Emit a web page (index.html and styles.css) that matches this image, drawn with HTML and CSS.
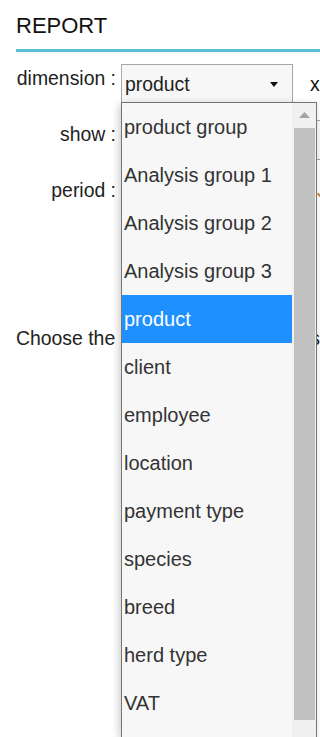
FILE: index.html
```html
<!DOCTYPE html>
<html lang="en">
<head>
  <meta charset="UTF-8" />
  <meta name="viewport" content="width=device-width, initial-scale=1.0"/>
  <title>Report</title>
  <link rel="stylesheet" href="styles.css">
</head>
<body>
  <h1 class="title">REPORT</h1>
  <div class="form">
    <div class="row">
      <label class="label">dimension :</label>
      <div class="select">
        <span>product</span>
        <svg class="caret" width="8" height="5" viewBox="0 0 8 5"><path d="M0 0h8L4 5z" fill="#111"/></svg>
      </div>
      <span class="extra">x</span>
    </div>
    <div class="row">
      <label class="label">show :</label>
      <div class="select wide"><span>quantity</span></div>
    </div>
    <div class="row">
      <label class="label">period :</label>
      <div class="period"><span class="date">01/01/24</span><span class="date-icon">J</span></div>
    </div>
  </div>
  <p class="hint"><span class="hint-start">Choose the</span><span class="hint-end">s</span></p>

  <div class="dropdown">
    <ul class="options">
      <li>product group</li>
      <li>Analysis group 1</li>
      <li>Analysis group 2</li>
      <li>Analysis group 3</li>
      <li class="selected">product</li>
      <li>client</li>
      <li>employee</li>
      <li>location</li>
      <li>payment type</li>
      <li>species</li>
      <li>breed</li>
      <li>herd type</li>
      <li>VAT</li>
    </ul>
    <div class="scrollbar">
      <div class="scroll-up">
        <svg width="11" height="6" viewBox="0 0 11 6"><path d="M0 6L5.5 0L11 6z" fill="#a3a3a3"/></svg>
      </div>
      <div class="thumb"></div>
    </div>
  </div>
</body>
</html>
```

FILE: styles.css
```css
html, body {
  height: 737px;
  overflow: hidden;
}
body {
  margin: 0;
  padding: 0 0 0 16px;
  font-family: "Liberation Sans", Arial, sans-serif;
  font-size: 19.4px;
  color: #222;
  background-color: #fff;
  position: relative;
}
.title {
  font-size: 22px;
  font-weight: normal;
  color: #111;
  margin: 0;
  padding: 13px 0 10px;
  border-bottom: 3px solid #5bbfd8;
}
.form {
  margin-top: 12px;
  display: flex;
  flex-direction: column;
  gap: 16px;
}
.row {
  display: flex;
  align-items: flex-start;
  height: 40px;
  white-space: nowrap;
}
.label {
  width: 100px;
  margin-right: 5px;
  padding-top: 3px;
  text-align: right;
  flex-shrink: 0;
}
.select {
  width: 172px;
  height: 40px;
  box-sizing: border-box;
  border: 1px solid #a6a6a6;
  background-color: #f7f7f7;
  padding: 0 14px 0 3px;
  display: flex;
  align-items: center;
  justify-content: space-between;
  flex-shrink: 0;
}
.select.wide {
  width: 199px;
  border-right: none;
}
.extra {
  margin-left: 17px;
  padding-top: 9px;
  color: #111;
}
.period {
  padding-top: 3px;
  flex-shrink: 0;
}
.date {
  display: inline-block;
  width: 196px;
}
.date-icon {
  color: #c07a1a;
}
.hint {
  margin: 111px 0 0;
  white-space: nowrap;
  display: flex;
}
.hint-start {
  width: 300px;
}
.dropdown {
  position: absolute;
  left: 121px;
  top: 102px;
  width: 196px;
  height: 635px;
  box-sizing: border-box;
  border: 1px solid #767676;
  border-bottom: none;
  background-color: #f7f7f7;
  box-shadow: -2px 2px 8px rgba(0, 0, 0, 0.2);
  display: flex;
  overflow: hidden;
}
.options {
  list-style: none;
  margin: 0;
  padding: 0;
  width: 170px;
  font-size: 20px;
  color: #333;
}
.options li {
  height: 48px;
  line-height: 48px;
  padding-left: 2px;
  white-space: nowrap;
}
.options li.selected {
  background-color: #1e90ff;
  color: #fff;
}
.scrollbar {
  width: 24px;
  background-color: #f0f0f0;
}
.scroll-up {
  height: 25px;
  display: flex;
  justify-content: center;
  align-items: flex-start;
  padding-top: 9px;
  box-sizing: border-box;
  padding-left: 1px;
}
.thumb {
  margin: 0 1px 0 2px;
  height: 592px;
  background-color: #c1c1c1;
}
```
